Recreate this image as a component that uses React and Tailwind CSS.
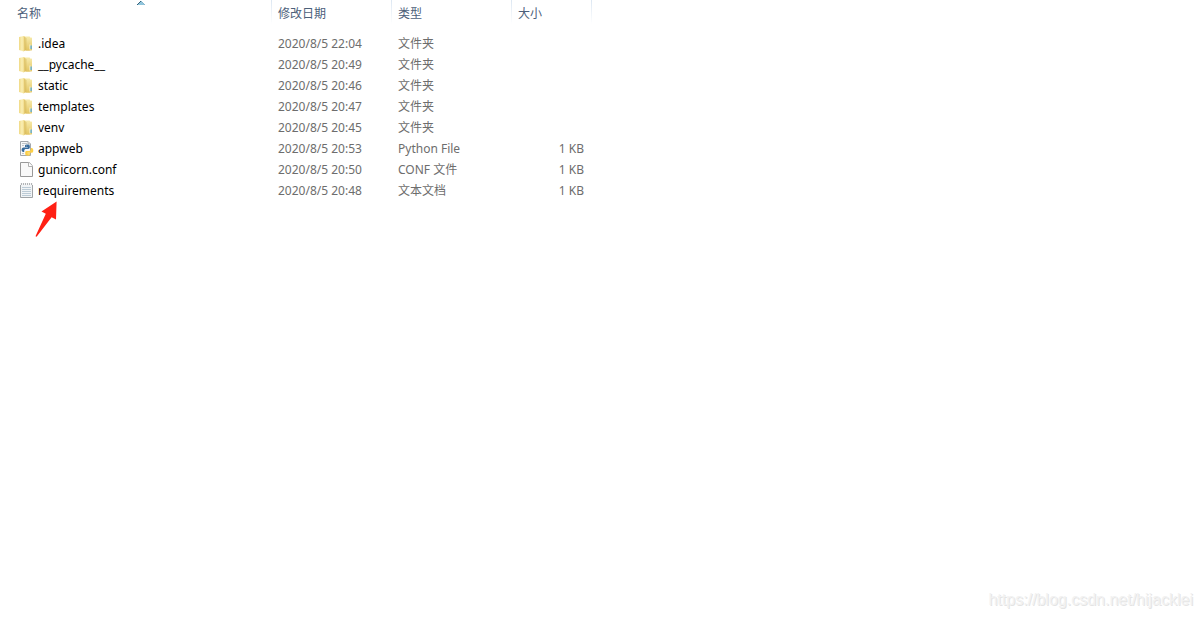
const FILES = [
  { name: '.idea', date: '2020/8/5 22:04', type: '文件夹', size: '', kind: 'folder' },
  { name: '__pycache__', date: '2020/8/5 20:49', type: '文件夹', size: '', kind: 'folder' },
  { name: 'static', date: '2020/8/5 20:46', type: '文件夹', size: '', kind: 'folder' },
  { name: 'templates', date: '2020/8/5 20:47', type: '文件夹', size: '', kind: 'folder' },
  { name: 'venv', date: '2020/8/5 20:45', type: '文件夹', size: '', kind: 'folder' },
  { name: 'appweb', date: '2020/8/5 20:53', type: 'Python File', size: '1 KB', kind: 'python' },
  { name: 'gunicorn.conf', date: '2020/8/5 20:50', type: 'CONF 文件', size: '1 KB', kind: 'file' },
  { name: 'requirements', date: '2020/8/5 20:48', type: '文本文档', size: '1 KB', kind: 'text', marked: true },
]

function FolderIcon() {
  return (
    <svg width="16" height="16" viewBox="0 0 16 16" className="shrink-0" aria-hidden="true">
      <defs>
        <linearGradient id="folder-front" x1="0" y1="0" x2="1" y2="0">
          <stop offset="0" stopColor="#f0d985" />
          <stop offset="0.5" stopColor="#faefb4" />
          <stop offset="1" stopColor="#ecd27a" />
        </linearGradient>
        <linearGradient id="folder-back" x1="0" y1="0" x2="0" y2="1">
          <stop offset="0" stopColor="#f6e9a8" />
          <stop offset="1" stopColor="#e3c563" />
        </linearGradient>
      </defs>
      <path d="M5 .5h6.600l.4.5v13l-.5.5H5z" fill="url(#folder-back)" />
      <path d="M8 1.500h5.500l.5.500v12l-.5.500H8z" fill="url(#folder-back)" />
      <path d="M8 2v12" stroke="#d9bc60" strokeWidth=".6" />
      <path d="M11.500 8.500h1v5h-1z" fill="#f8f6dc" />
      <path d="M12.500 9.500h1.200v3.500h-1.200z" fill="#4aa8e4" />
      <path d="M1 1 5.800 0 7 .8v13.700l-1.200 1L1 14z" fill="url(#folder-front)" />
      <path d="M6.900 1v13.500" stroke="#d0af4e" strokeWidth=".6" />
    </svg>
  )
}

function PythonIcon() {
  return (
    <svg width="16" height="16" viewBox="0 0 16 16" className="shrink-0" aria-hidden="true">
      <path d="M2.500.5H10l2.500 2.500v11.500h-10z" fill="#f7f8f9" stroke="#a4a8ac" />
      <path d="M10 .5v2.500h2.500" fill="#e4e6e8" stroke="#9ba0a6" strokeWidth=".8" />
      <path d="M4 2.500h5M4 4.500h2M4 12.500h2" stroke="#b4b9bd" strokeWidth=".8" />
      <path
        d="M8.900 3.500C6.900 3.500 7 4.400 7 5.100V6h2.800v.5H5.600C4.200 6.500 3.600 7.500 3.600 8.800s.6 2.200 1.600 2.200h1V9.700c0-1 .8-1.700 1.700-1.700h2.500c.8 0 1.400-.6 1.400-1.400V5C11.800 4 10.900 3.500 8.900 3.500z"
        fill="#386b9c"
      />
      <path
        d="M10.200 14.700c2 0 2-1 2-1.600v-.9H9.400v-.5h3.900c1.400 0 2-.9 2-2.300s-.6-2.400-1.600-2.400h-.9v1.300c0 1-.8 1.700-1.700 1.700H8.600c-.8 0-1.400.6-1.400 1.400v1.700c0 1 1 1.600 3 1.600z"
        fill="#fccf48"
      />
      <circle cx="8.300" cy="4.900" r=".4" fill="#fff" />
      <circle cx="11" cy="13.300" r=".4" fill="#fff" />
    </svg>
  )
}

function PageIcon({ lined }) {
  return (
    <svg width="16" height="16" viewBox="0 0 16 16" className="shrink-0" aria-hidden="true">
      {lined ? (
        <>
          <path d="M2.500 1.500h12v13h-12z" fill="#f1f4f6" stroke="#a0a4a7" />
          <path d="M4 4.500h9M4 6.500h9M4 8.500h9M4 10.500h9M4 12.500h9" stroke="#bccbd6" />
          <path d="M2 1h13" stroke="#f6f6f6" strokeWidth="2" />
          <path d="M3.500 0v2M5.500 0v2M7.500 0v2M9.500 0v2M11.500 0v2M13.500 0v2" stroke="#aaaeb1" strokeWidth=".9" />
        </>
      ) : (
        <>
          <path d="M2.500.5h8.700l3.300 3.300v10.700h-12z" fill="#f9f9f9" stroke="#999" />
          <path d="M10.500.5v4h4" fill="#fff" stroke="#b0b0b0" />
        </>
      )}
    </svg>
  )
}

function FileIcon({ kind }) {
  if (kind === 'folder') return <FolderIcon />
  if (kind === 'python') return <PythonIcon />
  return <PageIcon lined={kind === 'text'} />
}

function RedArrow() {
  return (
    <svg
      width="24"
      height="38"
      viewBox="0 0 24 38"
      className="pointer-events-none absolute left-4 top-full"
      aria-hidden="true"
    >
      <path d="M22.600 2.500 7.500 12.400 11.800 14.800 1.500 37.200 2.600 37.800 17.600 18.200 22 20.600z" fill="#ff2014" />
    </svg>
  )
}

function HeaderCell({ label, className, sorted }) {
  return (
    <th
      scope="col"
      aria-sort={sorted ? 'ascending' : undefined}
      className={`relative h-7 pb-px text-left font-normal text-[#4c607a] ${className}`}
    >
      {label}
      {sorted && (
        <svg width="10" height="5" viewBox="0 0 10 5" className="absolute left-1/2 top-0" aria-hidden="true">
          <path d="M1 5 5 1l4 4z" fill="#8fc5dc" />
          <path d="M1 5 5 1" stroke="#35617a" />
          <path d="M5 1l4 4" stroke="#6fa3bd" strokeWidth=".7" />
        </svg>
      )}
      <span className="absolute right-0 top-0 h-6 w-px bg-linear-to-b from-[#dce7f2] to-white" />
    </th>
  )
}

export default function App() {
  return (
    <div className="flex min-h-screen flex-col justify-between bg-white font-['Noto_Sans','Noto_Sans_CJK_SC',sans-serif] text-xs text-[#6d6d6d]">
      <main>
        <table className="w-[592px] table-fixed border-collapse">
          <thead>
            <tr>
              <HeaderCell label="名称" className="w-[272px] pl-[17px]" sorted />
              <HeaderCell label="修改日期" className="w-[120px] pl-1.5" />
              <HeaderCell label="类型" className="w-[120px] pl-1.5" />
              <HeaderCell label="大小" className="w-20 pl-1.5" />
            </tr>
          </thead>
          <tbody className="before:block before:h-[5px]">
            {FILES.map((file) => (
              <tr key={file.name} className="h-[21px]">
                <td className="p-0 pl-[18px] text-black">
                  <div className="relative flex items-center gap-1">
                    <FileIcon kind={file.kind} />
                    <span>{file.name}</span>
                    {file.marked && <RedArrow />}
                  </div>
                </td>
                <td className="p-0 pl-1.5">{file.date}</td>
                <td className="p-0 pl-1.5">{file.type}</td>
                <td className="p-0 pr-2 text-right">{file.size}</td>
              </tr>
            ))}
          </tbody>
        </table>
      </main>
      <footer className="flex justify-end px-2 pb-1.5 font-['Liberation_Sans',sans-serif] text-base text-[#f2f2f2] text-shadow-[1px_1px_0_#e4e4e4]">
        <a href="https://blog.csdn.net/hijacklei">https://blog.csdn.net/hijacklei</a>
      </footer>
    </div>
  )
}
